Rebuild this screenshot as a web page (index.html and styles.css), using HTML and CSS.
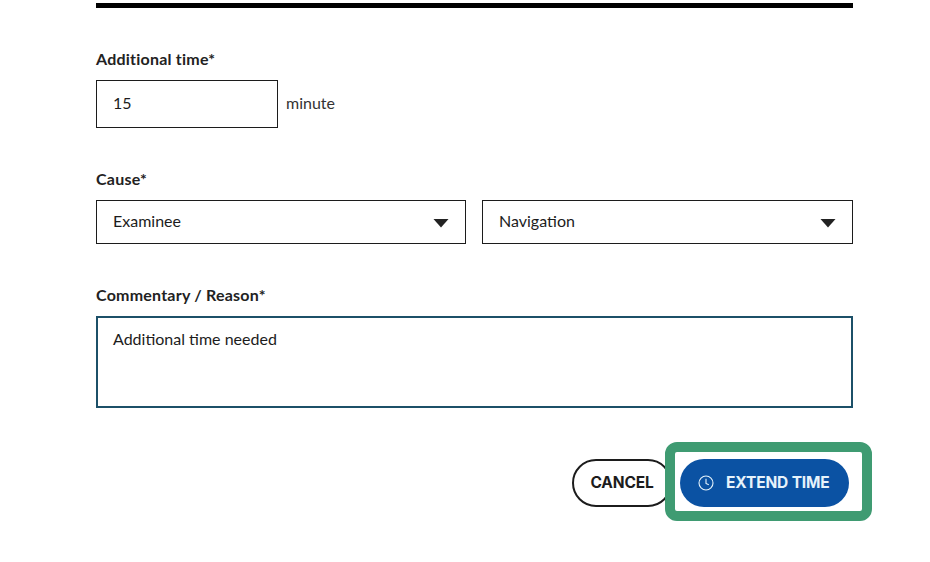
FILE: index.html
```html
<!DOCTYPE html>
<html lang="en">

<head>
  <meta charset="UTF-8">
  <meta name="viewport" content="width=device-width, initial-scale=1.0">
  <title>Extend time</title>
  <link rel="stylesheet" href="styles.css">
</head>

<body>
  <form class="extend-form">
    <div class="form-group">
      <label for="additionalTime">Additional time*</label>
      <div class="time-row">
        <input type="text" id="additionalTime" class="time-input" value="15">
        <span class="unit">minute</span>
      </div>
    </div>

    <div class="form-group">
      <label for="cause">Cause*</label>
      <div class="select-row">
        <div class="select-box">
          <select id="cause">
            <option>Examinee</option>
          </select>
          <svg class="select-arrow" width="16" height="10" viewBox="0 0 16 10"><path d="M0.5 1h15L8 9.5z" /></svg>
        </div>
        <div class="select-box">
          <select id="subCause" aria-label="Cause detail">
            <option>Navigation</option>
          </select>
          <svg class="select-arrow" width="16" height="10" viewBox="0 0 16 10"><path d="M0.5 1h15L8 9.5z" /></svg>
        </div>
      </div>
    </div>

    <div class="form-group">
      <label for="reason">Commentary / Reason*</label>
      <textarea id="reason">Additional time needed</textarea>
    </div>

    <div class="actions">
      <button type="button" class="btn btn-cancel">CANCEL</button>
      <div class="highlight-wrap">
        <button type="button" class="btn btn-extend">
          <svg width="16" height="16" viewBox="0 0 16 16" fill="none" stroke="currentColor" stroke-width="1.1">
            <circle cx="8" cy="8" r="7" />
            <path d="M8 3.8V8.4L10.8 9.8" />
          </svg>
          EXTEND TIME
        </button>
        <div class="highlight"></div>
      </div>
    </div>
  </form>
</body>

</html>
```

FILE: styles.css
```css
* {
  margin: 0;
  padding: 0;
  box-sizing: border-box;
}

body {
  font-family: 'Lato', 'Open Sans', sans-serif;
  background: #fff;
  color: #1c1c1c;
  height: 562px;
  overflow: hidden;
}

.extend-form {
  width: 757px;
  margin: 3px 0 0 96px;
  border-top: 5px solid #000;
}

.form-group {
  padding-top: 41px;
}

.form-group label {
  display: block;
  height: 20px;
  margin-bottom: 11px;
  font-size: 16px;
  font-weight: 700;
  line-height: 20px;
  letter-spacing: 0.22px;
  color: #222;
}

.time-row {
  display: flex;
  align-items: center;
  gap: 8px;
}

.time-input,
.select-box select,
textarea {
  font-family: inherit;
  font-size: 16px;
  color: #1c1c1c;
  background: #fff;
  border-radius: 0;
  outline: none;
}

.time-input {
  width: 182px;
  height: 48px;
  padding: 0 16px 3px;
  border: 1px solid #1c1c1c;
}

.unit {
  padding-bottom: 3px;
  font-size: 16px;
  color: #333;
}

.select-row {
  display: grid;
  grid-template-columns: 370px 371px;
  gap: 16px;
}

.select-box {
  position: relative;
  height: 44px;
}

.select-box select {
  appearance: none;
  width: 100%;
  height: 100%;
  padding: 0 16px 3px;
  border: 1px solid #1c1c1c;
}

.select-arrow {
  position: absolute;
  top: 18px;
  right: 17px;
  fill: #222;
}

textarea {
  display: block;
  width: 100%;
  height: 92px;
  padding: 11px 15px;
  border: 2px solid #1c5068;
  line-height: 20px;
  resize: none;
}

.actions {
  display: flex;
  justify-content: flex-end;
  gap: 8px;
  margin-top: 51px;
  padding-right: 4px;
}

.btn {
  height: 48px;
  border-radius: 24px;
  font-family: 'Inter', 'Liberation Sans', sans-serif;
  font-size: 15.5px;
  font-weight: 700;
  letter-spacing: -0.15px;
  padding-bottom: 1px;
  cursor: pointer;
}

.btn-cancel {
  width: 100px;
  background: #fff;
  border: 2px solid #1c1c1c;
  color: #1c1c1c;
}

.btn-extend {
  display: flex;
  align-items: center;
  gap: 12px;
  width: 169px;
  padding-left: 18px;
  background: #0b52a3;
  border: none;
  color: #e6f3fb;
}

.highlight-wrap {
  position: relative;
}

.highlight {
  position: absolute;
  inset: -17px -23px -14px -15px;
  border: 10px solid #3f9b72;
  border-radius: 12px;
}
```
